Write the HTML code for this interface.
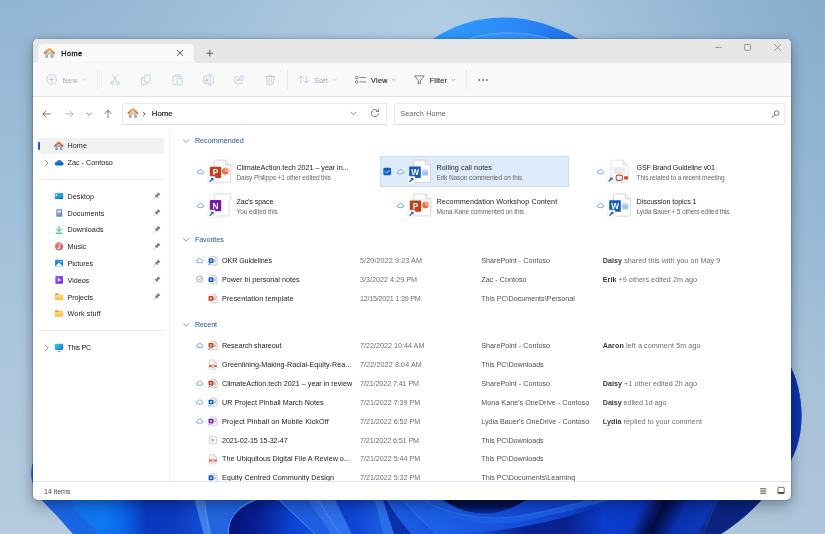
<!DOCTYPE html>
<html lang="en"><head><meta charset="utf-8"><title>Home - File Explorer</title>
<style>
html,body{margin:0;padding:0;}
body{width:825px;height:534px;overflow:hidden;position:relative;background:#a3bdd8;font-family:"Liberation Sans", sans-serif;}
.b{position:absolute;display:block;}
.t{position:absolute;white-space:nowrap;line-height:12px;font-size:7.2px;}
.t b{font-weight:700;color:#3a3a3a}
#win{position:absolute;left:33px;top:38.7px;width:758px;height:461.4px;border-radius:5px;background:#fff;overflow:hidden;}
#shadow{position:absolute;left:33px;top:38.7px;width:758px;height:461.4px;border-radius:5px;box-shadow:0 7px 15px rgba(0,0,20,.24),0 1px 8px rgba(0,0,20,.17),0 0 0 .6px rgba(40,55,80,.25);}
</style></head><body>
<svg class="b" style="left:0;top:0" width="825" height="534" viewBox="0 0 825 534">
<defs>
<linearGradient id="bg" x1="0" y1="0" x2="0" y2="1">
<stop offset="0" stop-color="#92b5d2"/><stop offset=".35" stop-color="#9fbfd9"/><stop offset=".65" stop-color="#acc6dc"/><stop offset="1" stop-color="#b5cadd"/>
</linearGradient>
<linearGradient id="bgr" x1="0" y1="0" x2="1" y2="0">
<stop offset="0" stop-color="#3a6fa8" stop-opacity="0"/><stop offset=".5" stop-color="#3a6fa8" stop-opacity=".02"/><stop offset="1" stop-color="#3a6fa8" stop-opacity=".06"/>
</linearGradient>
<radialGradient id="bgtr" gradientUnits="userSpaceOnUse" cx="840" cy="40" r="330">
<stop offset="0" stop-color="#3a6fa8" stop-opacity=".08"/><stop offset=".6" stop-color="#3a6fa8" stop-opacity=".05"/><stop offset="1" stop-color="#3a6fa8" stop-opacity="0"/>
</radialGradient>
<radialGradient id="bgl" gradientUnits="userSpaceOnUse" cx="438" cy="40" r="430">
<stop offset="0" stop-color="#dceefa" stop-opacity=".45"/><stop offset=".23" stop-color="#dceefa" stop-opacity=".34"/><stop offset=".47" stop-color="#dceefa" stop-opacity=".22"/><stop offset=".65" stop-color="#dceefa" stop-opacity=".11"/><stop offset=".78" stop-color="#dceefa" stop-opacity=".05"/><stop offset="1" stop-color="#dceefa" stop-opacity="0"/>
</radialGradient>
<linearGradient id="topb" x1="0" y1="0" x2="1" y2="0">
<stop offset="0" stop-color="#2f9dfc"/><stop offset=".55" stop-color="#2c8af7"/><stop offset="1" stop-color="#1f6ff0"/>
</linearGradient>
<clipPath id="bloom"><path d="M33 463 C30.5 469 30.5 478 33.5 486 C35.5 491 38.5 496 42 500.5 C47 506 52 511 57 516 L73 534 L721 534 C742 521 764 500 780 478 C795 458 801 440 801.5 418 C802 398 797 378 790 366 L700 300 L578 38.7 C552 24 527 17.5 503 17.5 C475 17.5 451 27 433 38.7 L100 300 Z"/></clipPath>
<linearGradient id="p2" gradientUnits="userSpaceOnUse" x1="60" y1="0" x2="200" y2="0">
<stop offset="0" stop-color="#1670ea"/><stop offset=".3" stop-color="#0e78f4"/><stop offset=".45" stop-color="#0b66ea"/><stop offset=".62" stop-color="#0a38c0"/><stop offset=".8" stop-color="#0b3abf"/><stop offset="1" stop-color="#154ad2"/>
</linearGradient>
<linearGradient id="p4" gradientUnits="userSpaceOnUse" x1="232" y1="0" x2="315" y2="0">
<stop offset="0" stop-color="#05157a"/><stop offset=".3" stop-color="#071f92"/><stop offset=".7" stop-color="#0c40d0"/><stop offset="1" stop-color="#1652de"/>
</linearGradient>
<linearGradient id="p6" gradientUnits="userSpaceOnUse" x1="335" y1="0" x2="378" y2="0">
<stop offset="0" stop-color="#0c3ecf"/><stop offset=".5" stop-color="#0f46d6"/><stop offset="1" stop-color="#1a58e0"/>
</linearGradient>
<linearGradient id="p8" gradientUnits="userSpaceOnUse" x1="386" y1="500" x2="470" y2="520">
<stop offset="0" stop-color="#0a38c0"/><stop offset=".35" stop-color="#1a5ae6"/><stop offset=".7" stop-color="#1450d8"/><stop offset="1" stop-color="#0a2ca8"/>
</linearGradient>
<linearGradient id="p9" gradientUnits="userSpaceOnUse" x1="455" y1="0" x2="640" y2="0">
<stop offset="0" stop-color="#1856de"/><stop offset=".15" stop-color="#1248cc"/><stop offset=".38" stop-color="#082090"/><stop offset=".6" stop-color="#08228e"/><stop offset=".8" stop-color="#0c3ccc"/><stop offset="1" stop-color="#0c3ccc" stop-opacity="0"/>
</linearGradient>
<linearGradient id="s1" gradientUnits="userSpaceOnUse" x1="399" y1="516" x2="439" y2="476">
<stop offset="0" stop-color="#1b5ce6"/><stop offset=".45" stop-color="#144ed8"/><stop offset="1" stop-color="#0f44d2"/>
</linearGradient>
<linearGradient id="s2" gradientUnits="userSpaceOnUse" x1="419" y1="516" x2="489" y2="446">
<stop offset="0" stop-color="#1e62ea"/><stop offset=".5" stop-color="#1652dc"/><stop offset="1" stop-color="#0f44d2"/>
</linearGradient>
<linearGradient id="lens" gradientUnits="userSpaceOnUse" x1="0" y1="498" x2="0" y2="514">
<stop offset="0" stop-color="#030a30"/><stop offset=".55" stop-color="#05165a"/><stop offset="1" stop-color="#0b2ea6"/>
</linearGradient>
<linearGradient id="p10" gradientUnits="userSpaceOnUse" x1="600" y1="517" x2="765" y2="604">
<stop offset="0" stop-color="#0c3ccc"/><stop offset=".17" stop-color="#0b38c4"/><stop offset=".235" stop-color="#061a6e"/><stop offset=".275" stop-color="#030d42"/><stop offset=".31" stop-color="#051660"/><stop offset=".38" stop-color="#0a30ac"/><stop offset=".5" stop-color="#0c38b8"/><stop offset=".53" stop-color="#0a2480"/><stop offset=".8" stop-color="#0a2684"/>
</linearGradient>
<linearGradient id="dk1" gradientUnits="userSpaceOnUse" x1="0" y1="498" x2="0" y2="520">
<stop offset="0" stop-color="#01051e"/><stop offset="1" stop-color="#03104e" stop-opacity="0"/>
</linearGradient>
<linearGradient id="rs" gradientUnits="userSpaceOnUse" x1="785" y1="0" x2="803" y2="0">
<stop offset="0" stop-color="#0a2a9a"/><stop offset="1" stop-color="#1038b4"/>
</linearGradient>
</defs>
<rect width="825" height="534" fill="url(#bg)"/>
<rect width="825" height="534" fill="url(#bgr)"/><rect width="825" height="534" fill="url(#bgtr)"/><rect width="825" height="534" fill="url(#bgl)"/>
<path d="M433 38.7 C451 27 475 17.5 503 17.5 C527 17.5 552 24 578 38.7 L578 60 L433 60 Z" fill="url(#topb)"/>
<path d="M470 38.7 C490 31.5 522 30.5 550 38.7 Z" fill="#46a4fc" opacity=".45"/><path d="M470 38.7 C490 31.5 522 30.5 550 38.7" fill="none" stroke="#6cbcff" stroke-width=".9" opacity=".8"/>
<g clip-path="url(#bloom)">
<rect x="0" y="300" width="825" height="234" fill="#1a66e2"/>
<path d="M30 464 L45 480 L65 500.5 L90 525 L99 534 L215 534 L205 480 Z" fill="url(#p2)"/>
<path d="M190 480 L194.5 500 L203.6 534 L212 534 L204 500 L200 480 Z" fill="#3f80e8"/>
<path d="M200 480 L204 500 L212 534 L232 534 L232 480 Z" fill="#2464e0"/>
<path d="M204.6 500 L209 534" stroke="#5a9af2" stroke-width=".8" fill="none"/>
<path d="M228 534 C228 520 232 508 257 500 L270 480 L330 480 L330 534 Z" fill="url(#p4)"/>
<path d="M228 534 C228 520 234 507 258 499" stroke="#4a9af5" stroke-width="1.3" fill="none"/>
<path d="M262 480 L279 500 L315 534 L345 534 L320 480 Z" fill="#1f5ee4"/>
<path d="M279 500 L315 534" stroke="#5a9ef5" stroke-width=".8" fill="none"/>
<path d="M290 480 L308 500 L331 534 L352 534 L335 500 L325 480 Z" fill="#2f70ec"/>
<path d="M300 480 L318 500 L340 534" stroke="#5a9ef5" stroke-width=".7" fill="none"/>
<path d="M325 480 L335 500 L352 534 L392 534 L380 480 Z" fill="url(#p6)"/>
<path d="M372 480 L375 500 L383 534 L394 534 L385 500 L382 480 Z" fill="#2a6eea"/>
<path d="M380 480 L383 500 L394 534 L660 534 L660 480 Z" fill="#0a30ac"/>
<path d="M376 480 L386 498 C394 512 403 524 412 534 L600 534 L600 480 Z" fill="url(#s1)"/>
<path d="M390 480 L401 498 C412 512 424 523 437 534 L600 534 L600 480 Z" fill="url(#s2)"/>
<path d="M386 498 C394 512 403 524 412 534" stroke="#3f80f0" stroke-width=".7" fill="none" opacity=".8"/>
<path d="M401 498 C412 512 424 523 437 534" stroke="#3f80f0" stroke-width=".7" fill="none" opacity=".8"/>
<path d="M575 480 L575 534 L825 534 L825 480 Z" fill="url(#p10)"/>
<path d="M440 498 C454 508 468 513.5 484 513.5 C502 513.5 516 507 529 498 Z" fill="url(#lens)"/>
<path d="M455 534 C505 531 550 524 600 506 L640 498 L640 534 Z" fill="url(#p9)"/>
<path d="M424 503 C452 519 488 524 520 518.5 C555 512 585 504 618 495" stroke="#1b5ee6" stroke-width="6" fill="none" stroke-linecap="round"/>
<path d="M424 501 C452 516 488 521 520 516 C555 510 585 502 618 493" stroke="#3a7cf0" stroke-width=".8" fill="none" opacity=".7"/>
<path d="M717 500 L703 534" stroke="#2a58c8" stroke-width=".6" fill="none" opacity=".7"/>
<rect x="785" y="300" width="40" height="200" fill="url(#rs)"/>
</g>
</svg>
<div id="shadow"></div>
<div id="win">
<div class="b" style="left:-33px;top:-38.7px;width:825px;height:534px;will-change:transform;">
<div class="b" style="left:33px;top:38.7px;width:758px;height:23.9px;background:#e7e7e7;"></div>
<svg class="b" style="left:0px;top:0px;" width="825" height="534" viewBox="0 0 825 534"><path d="M34.4 62.7 Q38.6 62.7 38.6 58.6 V48.4 Q38.6 44 43 44 H189.3 Q193.7 44 193.7 48.4 V58.6 Q193.7 62.7 197.9 62.7 Z" fill="#f9f9f9"/></svg>
<span class="t" id="t1" style="left:61.25px;top:47.80px;font-size:7.3px;color:#1b1b1b;letter-spacing:0.445px;-webkit-text-stroke:.32px #1b1b1b;">Home</span>
<div class="b" style="left:33px;top:62.5px;width:758px;height:33.5px;background:#f9f9f9;border-bottom:0.6px solid #e2e2e2;"></div>
<span class="t" id="t2" style="left:62.5px;top:74.50px;font-size:7.2px;color:#a5a5a5;letter-spacing:0.37px;">New</span>
<span class="t" id="t3" style="left:314.25px;top:74.50px;font-size:7.2px;color:#a5a5a5;letter-spacing:0.141px;">Sort</span>
<span class="t" id="t4" style="left:371px;top:74.50px;font-size:7.2px;color:#1b1b1b;letter-spacing:0.324px;-webkit-text-stroke:.12px #1b1b1b;">View</span>
<span class="t" id="t5" style="left:429.75px;top:74.50px;font-size:7.2px;color:#1b1b1b;letter-spacing:0.211px;-webkit-text-stroke:.12px #1b1b1b;">Filter</span>
<div class="b" style="left:97.2px;top:70px;width:0.6px;height:19px;background:#e6e6e6;"></div>
<div class="b" style="left:287.45px;top:70px;width:0.6px;height:19px;background:#e6e6e6;"></div>
<div class="b" style="left:465.95px;top:70px;width:0.6px;height:19px;background:#e6e6e6;"></div>
<div class="b" style="left:122px;top:103px;width:264.5px;height:21.5px;background:#fff;border:0.6px solid #eaeaea;border-bottom-color:#dcdcdc;border-radius:2px;box-sizing:border-box;"></div>
<div class="b" style="left:394.25px;top:103px;width:390.5px;height:21.5px;background:#fff;border:0.6px solid #eaeaea;border-bottom-color:#dcdcdc;border-radius:2px;box-sizing:border-box;"></div>
<span class="t" id="t6" style="left:151.75px;top:108.10px;font-size:7.8px;color:#1b1b1b;letter-spacing:0.047px;-webkit-text-stroke:.18px #1b1b1b;">Home</span>
<span class="t" id="t7" style="left:400.25px;top:108.25px;font-size:7.2px;color:#5f5f5f;letter-spacing:0.163px;">Search Home</span>
<div class="b" style="left:38px;top:137.5px;width:126.2px;height:16.2px;background:#f1f1f1;border-radius:2.5px;"></div>
<div class="b" style="left:37.9px;top:141.9px;width:1.8px;height:7.8px;background:#0f5fc0;border-radius:1px;"></div>
<div class="b" style="left:169px;top:130px;width:0.6px;height:351px;background:#eeeeee;"></div>
<div class="b" style="left:38px;top:178.6px;width:126px;height:0.6px;background:#ececec;"></div>
<div class="b" style="left:38px;top:330.4px;width:126px;height:0.6px;background:#ececec;"></div>
<span class="t" id="t8" style="left:67.5px;top:140.25px;font-size:7.2px;color:#1b1b1b;letter-spacing:0.078px;">Home</span>
<span class="t" id="t9" style="left:67.5px;top:157.25px;font-size:7.2px;color:#1b1b1b;letter-spacing:0.012px;">Zac - Contoso</span>
<span class="t" id="t10" style="left:67.5px;top:190.75px;font-size:7.2px;color:#1b1b1b;letter-spacing:0.032px;">Desktop</span>
<span class="t" id="t11" style="left:67.5px;top:207.50px;font-size:7.2px;color:#1b1b1b;letter-spacing:0.06px;">Documents</span>
<span class="t" id="t12" style="left:67.5px;top:224.30px;font-size:7.2px;color:#1b1b1b;letter-spacing:0.06px;">Downloads</span>
<span class="t" id="t13" style="left:67.5px;top:241.10px;font-size:7.2px;color:#1b1b1b;letter-spacing:-0.016px;">Music</span>
<span class="t" id="t14" style="left:67.5px;top:257.90px;font-size:7.2px;color:#1b1b1b;letter-spacing:-0.059px;">Pictures</span>
<span class="t" id="t15" style="left:67.5px;top:274.70px;font-size:7.2px;color:#1b1b1b;letter-spacing:-0.027px;">Videos</span>
<span class="t" id="t16" style="left:67.5px;top:291.50px;font-size:7.2px;color:#1b1b1b;letter-spacing:-0.059px;">Projects</span>
<span class="t" id="t17" style="left:67.5px;top:308.30px;font-size:7.2px;color:#1b1b1b;letter-spacing:0.121px;">Work stuff</span>
<span class="t" id="t18" style="left:67.5px;top:341.80px;font-size:7.2px;color:#1b1b1b;letter-spacing:-0.309px;">This PC</span>
<span class="t" id="t19" style="left:194.9px;top:135.30px;font-size:7.2px;color:#24559f;">Recommended</span>
<span class="t" id="t20" style="left:194.9px;top:234.20px;font-size:7.2px;color:#24559f;letter-spacing:-0.09px;">Favorites</span>
<span class="t" id="t21" style="left:194.9px;top:319.20px;font-size:7.2px;color:#24559f;letter-spacing:-0.13px;">Recent</span>
<div class="b" style="left:380.2px;top:155.8px;width:188.8px;height:31px;background:#ddebfa;border:0.6px solid #c6ddf6;box-sizing:border-box;border-radius:.6px;"></div>
<span class="t" id="t22" style="left:236.5px;top:162.00px;font-size:7.2px;color:#1b1b1b;letter-spacing:-0.041px;">ClimateAction.tech 2021 – year in...</span>
<span class="t" id="t23" style="left:236.5px;top:171.90px;font-size:6.6px;color:#6a6a6a;letter-spacing:-0.15px;">Daisy Philipps +1 other edited this</span>
<span class="t" id="t24" style="left:236.5px;top:195.75px;font-size:7.2px;color:#1b1b1b;letter-spacing:-0.125px;">Zac's space</span>
<span class="t" id="t25" style="left:236.5px;top:205.65px;font-size:6.6px;color:#6a6a6a;letter-spacing:-0.119px;">You edited this</span>
<span class="t" id="t26" style="left:436.5px;top:162.00px;font-size:7.2px;color:#1b1b1b;letter-spacing:0.064px;">Rolling call notes</span>
<span class="t" id="t27" style="left:436.5px;top:171.90px;font-size:6.6px;color:#6a6a6a;letter-spacing:-0.145px;">Erik Nason commented on this</span>
<span class="t" id="t28" style="left:436.5px;top:195.75px;font-size:7.2px;color:#1b1b1b;letter-spacing:0.097px;">Recommendation Workshop Content</span>
<span class="t" id="t29" style="left:436.5px;top:205.65px;font-size:6.6px;color:#6a6a6a;letter-spacing:-0.14px;">Mona Kane commented on this</span>
<span class="t" id="t30" style="left:636.5px;top:162.00px;font-size:7.2px;color:#1b1b1b;letter-spacing:-0.159px;">GSF Brand Guideline v01</span>
<span class="t" id="t31" style="left:636.5px;top:171.90px;font-size:6.6px;color:#6a6a6a;letter-spacing:-0.148px;">This related to a recent meeting</span>
<span class="t" id="t32" style="left:636.5px;top:195.75px;font-size:7.2px;color:#1b1b1b;letter-spacing:-0.081px;">Discussion topics 1</span>
<span class="t" id="t33" style="left:636.5px;top:205.65px;font-size:6.6px;color:#6a6a6a;letter-spacing:-0.153px;">Lydia Bauer + 5 others edited this</span>
<div class="b" style="left:170px;top:130px;width:621px;height:351.2px;overflow:hidden;"><div class="b" style="left:-170px;top:-130px;">
<span class="t" id="t34" style="left:222px;top:255.25px;font-size:7.2px;color:#1b1b1b;letter-spacing:-0.11px;">OKR Guidelines</span>
<span class="t" id="t35" style="left:360px;top:255.25px;font-size:7.2px;color:#6e6e6e;letter-spacing:0.097px;">5/20/2022 9:23 AM</span>
<span class="t" id="t36" style="left:481.25px;top:255.25px;font-size:7.2px;color:#505050;letter-spacing:0.003px;">SharePoint - Contoso</span>
<span class="t" id="t37" style="left:602.75px;top:255.25px;font-size:7.2px;color:#6e6e6e;letter-spacing:0.035px;"><b>Daisy</b> shared this with you on May 9</span>
<span class="t" id="t38" style="left:222px;top:274.10px;font-size:7.2px;color:#1b1b1b;letter-spacing:0.025px;">Power bi personal notes</span>
<span class="t" id="t39" style="left:360px;top:274.10px;font-size:7.2px;color:#6e6e6e;letter-spacing:0.016px;">3/3/2022 4:29 PM</span>
<span class="t" id="t40" style="left:481.25px;top:274.10px;font-size:7.2px;color:#505050;letter-spacing:0.012px;">Zac - Contoso</span>
<span class="t" id="t41" style="left:602.75px;top:274.10px;font-size:7.2px;color:#6e6e6e;letter-spacing:0.039px;"><b>Erik</b> +9 others edited 2m ago</span>
<span class="t" id="t42" style="left:222px;top:293.00px;font-size:7.2px;color:#1b1b1b;letter-spacing:0.075px;">Presentation template</span>
<span class="t" id="t43" style="left:360px;top:293.00px;font-size:7.2px;color:#6e6e6e;letter-spacing:-0.236px;">12/15/2021 1:39 PM</span>
<span class="t" id="t44" style="left:481.25px;top:293.00px;font-size:7.2px;color:#505050;letter-spacing:-0.03px;">This PC\Documents\Personal</span>
<span class="t" id="t45" style="left:222px;top:340.00px;font-size:7.2px;color:#1b1b1b;letter-spacing:-0.078px;">Research shareout</span>
<span class="t" id="t46" style="left:360px;top:340.00px;font-size:7.2px;color:#6e6e6e;letter-spacing:0.003px;">7/22/2022 10:44 AM</span>
<span class="t" id="t47" style="left:481.25px;top:340.00px;font-size:7.2px;color:#505050;letter-spacing:0.003px;">SharePoint - Contoso</span>
<span class="t" id="t48" style="left:602.75px;top:340.00px;font-size:7.2px;color:#6e6e6e;letter-spacing:0.071px;"><b>Aaron</b> left a comment 5m ago</span>
<span class="t" id="t49" style="left:222px;top:358.90px;font-size:7.2px;color:#1b1b1b;letter-spacing:0.017px;">Greenlining-Making-Racial-Equity-Rea...</span>
<span class="t" id="t50" style="left:360px;top:358.90px;font-size:7.2px;color:#6e6e6e;letter-spacing:0.092px;">7/22/2022 8:04 AM</span>
<span class="t" id="t51" style="left:481.25px;top:358.90px;font-size:7.2px;color:#505050;letter-spacing:-0.043px;">This PC\Downloads</span>
<span class="t" id="t52" style="left:222px;top:377.80px;font-size:7.2px;color:#1b1b1b;letter-spacing:-0.004px;">ClimateAction.tech 2021 – year in review</span>
<span class="t" id="t53" style="left:360px;top:377.80px;font-size:7.2px;color:#6e6e6e;letter-spacing:-0.103px;">7/21/2022 7:41 PM</span>
<span class="t" id="t54" style="left:481.25px;top:377.80px;font-size:7.2px;color:#505050;letter-spacing:0.003px;">SharePoint - Contoso</span>
<span class="t" id="t55" style="left:602.75px;top:377.80px;font-size:7.2px;color:#6e6e6e;letter-spacing:0.031px;"><b>Daisy</b> +1 other edited 2h ago</span>
<span class="t" id="t56" style="left:222px;top:396.70px;font-size:7.2px;color:#1b1b1b;letter-spacing:0.018px;">UR Project Pinball March Notes</span>
<span class="t" id="t57" style="left:360px;top:396.70px;font-size:7.2px;color:#6e6e6e;letter-spacing:-0.032px;">7/21/2022 7:39 PM</span>
<span class="t" id="t58" style="left:481.25px;top:396.70px;font-size:7.2px;color:#505050;letter-spacing:0.022px;">Mona Kane's OneDrive - Contoso</span>
<span class="t" id="t59" style="left:602.75px;top:396.70px;font-size:7.2px;color:#6e6e6e;letter-spacing:-0.055px;"><b>Daisy</b> edited 1d ago</span>
<span class="t" id="t60" style="left:222px;top:415.60px;font-size:7.2px;color:#1b1b1b;letter-spacing:0.078px;">Project Pinball on Mobile KickOff</span>
<span class="t" id="t61" style="left:360px;top:415.60px;font-size:7.2px;color:#6e6e6e;letter-spacing:-0.032px;">7/21/2022 6:52 PM</span>
<span class="t" id="t62" style="left:481.25px;top:415.60px;font-size:7.2px;color:#505050;letter-spacing:-0.021px;">Lydia Bauer's OneDrive - Contoso</span>
<span class="t" id="t63" style="left:602.75px;top:415.60px;font-size:7.2px;color:#6e6e6e;letter-spacing:0.058px;"><b>Lydia</b> replied to your comment</span>
<span class="t" id="t64" style="left:222px;top:434.50px;font-size:7.2px;color:#1b1b1b;letter-spacing:-0.102px;">2021-02-15 15-32-47</span>
<span class="t" id="t65" style="left:360px;top:434.50px;font-size:7.2px;color:#6e6e6e;letter-spacing:-0.103px;">7/21/2022 6:51 PM</span>
<span class="t" id="t66" style="left:481.25px;top:434.50px;font-size:7.2px;color:#505050;letter-spacing:-0.043px;">This PC\Downloads</span>
<span class="t" id="t67" style="left:222px;top:453.40px;font-size:7.2px;color:#1b1b1b;letter-spacing:0.011px;">The Ubiquitous Digital File A Review o...</span>
<span class="t" id="t68" style="left:360px;top:453.40px;font-size:7.2px;color:#6e6e6e;letter-spacing:-0.032px;">7/21/2022 5:44 PM</span>
<span class="t" id="t69" style="left:481.25px;top:453.40px;font-size:7.2px;color:#505050;letter-spacing:-0.043px;">This PC\Downloads</span>
<span class="t" id="t70" style="left:222px;top:472.30px;font-size:7.2px;color:#1b1b1b;letter-spacing:0.059px;">Equity Centred Community Design</span>
<span class="t" id="t71" style="left:360px;top:472.30px;font-size:7.2px;color:#6e6e6e;letter-spacing:-0.032px;">7/21/2022 5:32 PM</span>
<span class="t" id="t72" style="left:481.25px;top:472.30px;font-size:7.2px;color:#505050;letter-spacing:0.004px;">This PC\Documents\Learning</span>
</div></div>
<div class="b" style="left:33px;top:481px;width:758px;height:0.6px;background:#dfe5f0;"></div>
<span class="t" id="t73" style="left:44px;top:485.50px;font-size:7.2px;color:#4a4a4a;letter-spacing:-0.084px;">14 items</span>
<svg class="b" style="left:0px;top:0px;" width="825" height="534" viewBox="0 0 825 534"><defs>
<linearGradient id="ho" x1="0" y1="0" x2="0" y2="1"><stop offset="0" stop-color="#f7a42c"/><stop offset="1" stop-color="#dc5f12"/></linearGradient>
<linearGradient id="ho2" x1="0" y1="0" x2="0" y2="1"><stop offset="0" stop-color="#ee6a2e"/><stop offset="1" stop-color="#d24a1a"/></linearGradient>
<linearGradient id="hg2" x1="0" y1="0" x2="0" y2="1"><stop offset="0" stop-color="#c3cfdd"/><stop offset="1" stop-color="#7f93ae"/></linearGradient>
<linearGradient id="hg" x1="0" y1="0" x2="0" y2="1"><stop offset="0" stop-color="#ececec"/><stop offset="1" stop-color="#9c9c9c"/></linearGradient>
<linearGradient id="od" x1="0" y1="0" x2="1" y2="1"><stop offset="0" stop-color="#1a8de8"/><stop offset="1" stop-color="#0b55b5"/></linearGradient>
<linearGradient id="dk" x1="0" y1="0" x2="1" y2="1"><stop offset="0" stop-color="#40c8f2"/><stop offset="1" stop-color="#1276c9"/></linearGradient>
<linearGradient id="dc" x1="0" y1="0" x2="1" y2="1"><stop offset="0" stop-color="#9db7d8"/><stop offset="1" stop-color="#5f7fb2"/></linearGradient>
<linearGradient id="mu" x1="0" y1="0" x2="1" y2="1"><stop offset="0" stop-color="#f58a3a"/><stop offset="1" stop-color="#c05aa6"/></linearGradient>
<linearGradient id="pc" x1="0" y1="0" x2="0" y2="1"><stop offset="0" stop-color="#2a9cf0"/><stop offset="1" stop-color="#0c62cc"/></linearGradient>
<linearGradient id="vd" x1="0" y1="0" x2="1" y2="1"><stop offset="0" stop-color="#a45cf5"/><stop offset="1" stop-color="#7326dc"/></linearGradient>
<linearGradient id="fd" x1="0" y1="0" x2="0" y2="1"><stop offset="0" stop-color="#ffe07a"/><stop offset="1" stop-color="#f6bd44"/></linearGradient>
</defs><circle cx="51.6" cy="79.4" r="4.85" fill="none" stroke="#b9b9b9" stroke-width=".65"/><path d="M49.2 79.4 H54 M51.6 77 V81.8" stroke="#8ec0f2" stroke-width=".7" stroke-linecap="round"/><path d="M82.9 78.9 L84.5 80.5 L86.1 78.9" fill="none" stroke="#b5b5b5" stroke-width="0.55" stroke-linecap="round" stroke-linejoin="round"/><path d="M112.3 74.9 L117.3 82.4 M117.7 74.9 L112.7 82.4" stroke="#b9b9b9" stroke-width=".65" stroke-linecap="round"/><circle cx="112.3" cy="83.2" r="1.55" fill="none" stroke="#8ec0f2" stroke-width=".65"/><circle cx="117.7" cy="83.2" r="1.55" fill="none" stroke="#8ec0f2" stroke-width=".65"/><path d="M143.6 77.6 H142.9 Q141.4 77.6 141.4 79.1 V83.2 Q141.4 84.7 142.9 84.7 H145.8 Q147.3 84.7 147.3 83.2 V82.9" fill="none" stroke="#b9b9b9" stroke-width=".65"/><rect x="144.3" y="75" width="5.9" height="7.4" rx="1.4" fill="none" stroke="#8ec0f2" stroke-width=".65"/><path d="M176.5 84.9 H174.3 Q172.9 84.9 172.9 83.5 V77.2 Q172.9 75.8 174.3 75.8 H175 M180 75.8 H180.6 Q182 75.8 182 77.2 V77.6" fill="none" stroke="#b9b9b9" stroke-width=".65"/><rect x="175" y="74.7" width="5" height="2" rx=".9" fill="none" stroke="#b9b9b9" stroke-width=".65"/><rect x="177" y="78.2" width="5.2" height="6.8" rx="1.2" fill="none" stroke="#8ec0f2" stroke-width=".65"/><path d="M208.6 76.2 H205.2 Q203.7 76.2 203.7 77.7 V81.9 Q203.7 83.4 205.2 83.4 H208.6 M211.4 76.2 H212 Q213.5 76.2 213.5 77.7 V81.9 Q213.5 83.4 212 83.4 H211.4" fill="none" stroke="#b9b9b9" stroke-width=".65"/><path d="M210 74.5 V85 M208.9 74.5 H211.1 M208.9 85 H211.1" stroke="#8ec0f2" stroke-width=".65" stroke-linecap="round"/><text x="205.1" y="81.7" font-family="Liberation Sans, sans-serif" font-size="4.6" fill="#8ec0f2" font-weight="700">A</text><path d="M238.4 76.6 H236.4 Q235 76.6 235 78 V82.3 Q235 83.7 236.4 83.7 H240.9 Q242.3 83.7 242.3 82.3 V81.9" fill="none" stroke="#b9b9b9" stroke-width=".65"/><path d="M241.2 75.6 L244.3 78.3 L241.2 81 V79.5 Q238.6 79.4 237.4 81.2 Q237.6 77.6 241.2 77.2 Z" fill="none" stroke="#8ec0f2" stroke-width=".65" stroke-linejoin="round"/><path d="M265.6 76.5 H275 M268.4 76.3 Q268.4 74.9 270.3 74.9 Q272.2 74.9 272.2 76.3 M266.6 76.6 L267.4 83.3 Q267.5 84.4 268.6 84.4 H272 Q273.1 84.4 273.2 83.3 L274 76.6 M269.3 78.6 V82.2 M271.3 78.6 V82.2" fill="none" stroke="#b9b9b9" stroke-width=".65" stroke-linecap="round"/><path d="M300.9 83.2 V76.2 M298.6 78.4 L300.9 76.1 L303.2 78.4" fill="none" stroke="#b9b9b9" stroke-width=".65" stroke-linecap="round" stroke-linejoin="round"/><path d="M306.2 75.9 V82.9 M303.9 80.7 L306.2 83 L308.5 80.7" fill="none" stroke="#8ec0f2" stroke-width=".65" stroke-linecap="round" stroke-linejoin="round"/><path d="M333.0 79.0 L334.6 80.6 L336.20000000000005 79.0" fill="none" stroke="#b5b5b5" stroke-width="0.55" stroke-linecap="round" stroke-linejoin="round"/><circle cx="356.7" cy="77.6" r="1.35" fill="none" stroke="#3c3c3c" stroke-width=".6"/><circle cx="356.7" cy="81.9" r="1.35" fill="none" stroke="#3c3c3c" stroke-width=".6"/><path d="M360 77.6 H365.7 M360 81.9 H365.7" stroke="#3c3c3c" stroke-width=".65" stroke-linecap="round"/><path d="M392.0 79.0 L393.6 80.6 L395.20000000000005 79.0" fill="none" stroke="#7a7a7a" stroke-width="0.55" stroke-linecap="round" stroke-linejoin="round"/><path d="M414.6 75.9 H424.2 L420.5 80.6 V83.2 L418.3 84.1 V80.6 Z" fill="none" stroke="#3c3c3c" stroke-width=".65" stroke-linejoin="round"/><path d="M451.79999999999995 79.0 L453.4 80.6 L455.0 79.0" fill="none" stroke="#7a7a7a" stroke-width="0.55" stroke-linecap="round" stroke-linejoin="round"/><circle cx="479.2" cy="80" r=".8" fill="#222"/><circle cx="483" cy="80" r=".8" fill="#222"/><circle cx="486.8" cy="80" r=".8" fill="#222"/><path d="M177.3 50.3 L182.8 55.5 M182.8 50.3 L177.3 55.5" stroke="#383838" stroke-width=".85" stroke-linecap="round"/><path d="M206.8 53.2 H212.8 M209.8 50.2 V56.2" stroke="#383838" stroke-width=".8" stroke-linecap="round"/><path d="M715.3 47.4 H721.8" stroke="#6f6f6f" stroke-width=".65"/><rect x="744.5" y="44.5" width="6.1" height="5.9" rx="1.1" fill="none" stroke="#6f6f6f" stroke-width=".65"/><path d="M774.4 44.4 L780.9 50.6 M780.9 44.4 L774.4 50.6" stroke="#6f6f6f" stroke-width=".65" stroke-linecap="round"/><path d="M50.4 113.9 H43 M46.1 110.8 L42.9 113.9 L46.1 117" fill="none" stroke="#4c4c4c" stroke-width=".75" stroke-linecap="round" stroke-linejoin="round"/><path d="M65.6 113.9 H73 M69.9 110.8 L73.1 113.9 L69.9 117" fill="none" stroke="#929292" stroke-width=".65" stroke-linecap="round" stroke-linejoin="round"/><path d="M87.0 112.94999999999999 L89.3 115.25 L91.6 112.94999999999999" fill="none" stroke="#4c4c4c" stroke-width="0.65" stroke-linecap="round" stroke-linejoin="round"/><path d="M108 117.6 V110.3 M104.8 113.5 L108 110.2 L111.2 113.5" fill="none" stroke="#4c4c4c" stroke-width=".75" stroke-linecap="round" stroke-linejoin="round"/><g transform="translate(127.6 108.15) scale(0.6625)"><path d="M2.1 7 L8 2 L13.9 7 V14.4 H9.8 V9.6 H6.2 V14.4 H2.1 Z" fill="url(#hg)"/><path d="M0.9 7.6 L8 1.1 L15.1 7.6" fill="none" stroke="url(#ho)" stroke-width="2.3" stroke-linecap="round" stroke-linejoin="round"/></g><path d="M143.4 112.2 L145.20000000000002 114.0 L143.4 115.8" fill="none" stroke="#333" stroke-width="0.85" stroke-linecap="round" stroke-linejoin="round"/><path d="M351.1 112.3 L353.5 114.7 L355.9 112.3" fill="none" stroke="#4c4c4c" stroke-width="0.65" stroke-linecap="round" stroke-linejoin="round"/><path d="M378.1 111.4 A3.6 3.6 0 1 0 378.5 113.6" fill="none" stroke="#4c4c4c" stroke-width=".7" stroke-linecap="round"/><path d="M376.2 111.4 H378.6 V109" fill="none" stroke="#4c4c4c" stroke-width=".7" stroke-linecap="round" stroke-linejoin="round"/><circle cx="776.6" cy="113.1" r="2.35" fill="none" stroke="#4f4f4f" stroke-width=".75"/><path d="M774.9 114.8 L771.8 117.6" stroke="#4f4f4f" stroke-width=".85" stroke-linecap="round"/><g transform="translate(43.9 48.0) scale(0.68125)"><path d="M2.1 7 L8 2 L13.9 7 V14.4 H9.8 V9.6 H6.2 V14.4 H2.1 Z" fill="url(#hg)"/><path d="M0.9 7.6 L8 1.1 L15.1 7.6" fill="none" stroke="url(#ho)" stroke-width="2.3" stroke-linecap="round" stroke-linejoin="round"/></g><path d="M760.2 488.6 H766.2 M760.2 490.2 H766.2 M760.2 491.8 H766.2 M760.2 493.4 H766.2" stroke="#555" stroke-width=".8"/><rect x="778" y="487.3" width="6.2" height="6.2" rx=".8" fill="none" stroke="#4a4a4a" stroke-width=".8"/><rect x="778" y="492" width="6.2" height="1.6" fill="#4a4a4a"/><g transform="translate(54.2 141.6) scale(0.575)"><path d="M2.1 7 L8 2 L13.9 7 V14.4 H9.8 V9.6 H6.2 V14.4 H2.1 Z" fill="url(#hg2)"/><path d="M0.9 7.6 L8 1.1 L15.1 7.6" fill="none" stroke="url(#ho2)" stroke-width="2.7" stroke-linecap="round" stroke-linejoin="round"/></g><path d="M45.2 160.2 L48.0 163.0 L45.2 165.8" fill="none" stroke="#686868" stroke-width="0.75" stroke-linecap="round" stroke-linejoin="round"/><path d="M45.300000000000004 345.09999999999997 L48.1 347.9 L45.300000000000004 350.7" fill="none" stroke="#686868" stroke-width="0.75" stroke-linecap="round" stroke-linejoin="round"/><g transform="translate(54.6 159.5) scale(0.64)"><path d="M3.4 9.4 C1.5 9.4 0.3 8.1 0.3 6.6 C0.3 5.1 1.5 4 3 4 C3.6 2 5.3 0.6 7.4 0.6 C9.5 0.6 11.1 2 11.5 3.9 C13 4.1 14 5.3 14 6.7 C14 8.2 12.9 9.4 11.3 9.4 Z" fill="url(#od)"/></g><rect x="54.9" y="193.1" width="8.3" height="6" rx=".7" fill="url(#dk)"/><rect x="54.9" y="198" width="8.3" height="1.1" fill="#0f6fbf" fill-opacity=".55"/><rect x="56" y="194.4" width=".9" height="1.6" fill="#e9fbff"/><rect x="56.1" y="209.1" width="6.1" height="7.7" rx=".7" fill="url(#dc)"/><rect x="57.6" y="210.5" width="3.2" height="2.6" fill="#c9d8ee"/><rect x="59.4" y="210.9" width="1" height="1" fill="#fff"/><path d="M59 226.2 V231.2 M56.5 228.9 L59 231.4 L61.5 228.9" fill="none" stroke="#1fb58f" stroke-width="1" stroke-linecap="round" stroke-linejoin="round"/><path d="M56.1 233.2 H61.9" stroke="#16a37f" stroke-width="1" stroke-linecap="round"/><circle cx="59.05" cy="246.4" r="4.15" fill="url(#mu)"/><path d="M59.6 248.2 V243.9 L61 244.5" fill="none" stroke="#fff" stroke-width=".7" stroke-linecap="round"/><circle cx="58.7" cy="248.2" r="1" fill="#fff"/><rect x="55.1" y="259.8" width="7.9" height="6.8" rx=".9" fill="url(#pc)"/><path d="M55.1 266.6 L59.05 262.6 L63 266.6 Z" fill="#fff"/><circle cx="60.9" cy="261.7" r=".7" fill="#e9f4ff"/><rect x="55.3" y="276.1" width="7.6" height="7.6" rx=".9" fill="url(#vd)"/><path d="M57.9 278.1 L61 279.9 L57.9 281.7 Z" fill="#fff"/><path d="M56.1 277 H56.9 M56.1 282.8 H56.9 M61.3 277 H62.1 M61.3 282.8 H62.1" stroke="#5c1fc4" stroke-width=".7"/><path d="M54.8 294.3 Q54.8 293.2 55.9 293.2 H58 L59.2 294.4 H62.2 Q63.2 294.4 63.2 295.4 V296.2 H54.8 Z" fill="#e9a93a"/><rect x="54.8" y="295.09999999999997" width="8.4" height="4.9" rx=".8" fill="url(#fd)"/><path d="M54.8 311.1 Q54.8 310.0 55.9 310.0 H58 L59.2 311.2 H62.2 Q63.2 311.2 63.2 312.2 V313.0 H54.8 Z" fill="#e9a93a"/><rect x="54.8" y="311.9" width="8.4" height="4.9" rx=".8" fill="url(#fd)"/><rect x="54.8" y="343.7" width="8.4" height="6.2" rx=".8" fill="url(#dk)"/><path d="M57.4 351.6 H60.6 M59 350 V351.5" stroke="#7f9bb5" stroke-width=".7"/><g transform="translate(156.8 195.89999999999998) scale(0.92)"><path d="M1.9 -3.5 L3.6 -1.8 C3.9 -1.5 3.8 -1.1 3.4 -0.9 L1.6 -0.1 L0.9 1.7 C0.7 2.1 0.3 2.2 0 1.9 L-1.9 0 C-2.2 -0.3 -2.1 -0.7 -1.7 -0.9 L0.1 -1.6 L0.9 -3.4 C1.1 -3.8 1.6 -3.8 1.9 -3.5 Z" fill="#7d7d7d"/><path d="M-1 1 L-3.3 3.3" stroke="#8a8a8a" stroke-width=".55" stroke-linecap="round"/></g><g transform="translate(156.8 212.7) scale(0.92)"><path d="M1.9 -3.5 L3.6 -1.8 C3.9 -1.5 3.8 -1.1 3.4 -0.9 L1.6 -0.1 L0.9 1.7 C0.7 2.1 0.3 2.2 0 1.9 L-1.9 0 C-2.2 -0.3 -2.1 -0.7 -1.7 -0.9 L0.1 -1.6 L0.9 -3.4 C1.1 -3.8 1.6 -3.8 1.9 -3.5 Z" fill="#7d7d7d"/><path d="M-1 1 L-3.3 3.3" stroke="#8a8a8a" stroke-width=".55" stroke-linecap="round"/></g><g transform="translate(156.8 229.5) scale(0.92)"><path d="M1.9 -3.5 L3.6 -1.8 C3.9 -1.5 3.8 -1.1 3.4 -0.9 L1.6 -0.1 L0.9 1.7 C0.7 2.1 0.3 2.2 0 1.9 L-1.9 0 C-2.2 -0.3 -2.1 -0.7 -1.7 -0.9 L0.1 -1.6 L0.9 -3.4 C1.1 -3.8 1.6 -3.8 1.9 -3.5 Z" fill="#7d7d7d"/><path d="M-1 1 L-3.3 3.3" stroke="#8a8a8a" stroke-width=".55" stroke-linecap="round"/></g><g transform="translate(156.8 246.29999999999998) scale(0.92)"><path d="M1.9 -3.5 L3.6 -1.8 C3.9 -1.5 3.8 -1.1 3.4 -0.9 L1.6 -0.1 L0.9 1.7 C0.7 2.1 0.3 2.2 0 1.9 L-1.9 0 C-2.2 -0.3 -2.1 -0.7 -1.7 -0.9 L0.1 -1.6 L0.9 -3.4 C1.1 -3.8 1.6 -3.8 1.9 -3.5 Z" fill="#7d7d7d"/><path d="M-1 1 L-3.3 3.3" stroke="#8a8a8a" stroke-width=".55" stroke-linecap="round"/></g><g transform="translate(156.8 263.09999999999997) scale(0.92)"><path d="M1.9 -3.5 L3.6 -1.8 C3.9 -1.5 3.8 -1.1 3.4 -0.9 L1.6 -0.1 L0.9 1.7 C0.7 2.1 0.3 2.2 0 1.9 L-1.9 0 C-2.2 -0.3 -2.1 -0.7 -1.7 -0.9 L0.1 -1.6 L0.9 -3.4 C1.1 -3.8 1.6 -3.8 1.9 -3.5 Z" fill="#7d7d7d"/><path d="M-1 1 L-3.3 3.3" stroke="#8a8a8a" stroke-width=".55" stroke-linecap="round"/></g><g transform="translate(156.8 279.9) scale(0.92)"><path d="M1.9 -3.5 L3.6 -1.8 C3.9 -1.5 3.8 -1.1 3.4 -0.9 L1.6 -0.1 L0.9 1.7 C0.7 2.1 0.3 2.2 0 1.9 L-1.9 0 C-2.2 -0.3 -2.1 -0.7 -1.7 -0.9 L0.1 -1.6 L0.9 -3.4 C1.1 -3.8 1.6 -3.8 1.9 -3.5 Z" fill="#7d7d7d"/><path d="M-1 1 L-3.3 3.3" stroke="#8a8a8a" stroke-width=".55" stroke-linecap="round"/></g><g transform="translate(156.8 296.7) scale(0.92)"><path d="M1.9 -3.5 L3.6 -1.8 C3.9 -1.5 3.8 -1.1 3.4 -0.9 L1.6 -0.1 L0.9 1.7 C0.7 2.1 0.3 2.2 0 1.9 L-1.9 0 C-2.2 -0.3 -2.1 -0.7 -1.7 -0.9 L0.1 -1.6 L0.9 -3.4 C1.1 -3.8 1.6 -3.8 1.9 -3.5 Z" fill="#7d7d7d"/><path d="M-1 1 L-3.3 3.3" stroke="#8a8a8a" stroke-width=".55" stroke-linecap="round"/></g><path d="M183.4 139.75 L186.1 142.45 L188.79999999999998 139.75" fill="none" stroke="#6a6a6a" stroke-width="0.7" stroke-linecap="round" stroke-linejoin="round"/><path d="M183.4 238.45000000000002 L186.1 241.15 L188.79999999999998 238.45000000000002" fill="none" stroke="#6a6a6a" stroke-width="0.7" stroke-linecap="round" stroke-linejoin="round"/><path d="M183.4 323.54999999999995 L186.1 326.25 L188.79999999999998 323.54999999999995" fill="none" stroke="#6a6a6a" stroke-width="0.7" stroke-linecap="round" stroke-linejoin="round"/></svg>
<div class="b" style="left:170px;top:130px;width:621px;height:351.2px;overflow:hidden;"><svg class="b" style="left:-170px;top:-130px;" width="825" height="534" viewBox="0 0 825 534"><path d="M215.0 160.15 H225.7 L230.7 165.15 V181.15 Q230.7 182.15 229.7 182.15 H215.0 Q214.0 182.15 214.0 181.15 V161.15 Q214.0 160.15 215.0 160.15 Z" fill="#fff" stroke="#bcbcbc" stroke-width=".6"/><path d="M225.7 160.15 V164.35 Q225.7 165.15 226.5 165.15 H230.7" fill="#f1f1f1" stroke="#bcbcbc" stroke-width=".6"/><circle cx="225.4" cy="171.35" r="3.3" fill="#ed6c47"/><path d="M225.4 171.35 V167.35 A4 4 0 0 1 229.4 171.35 Z" fill="#ff8f6b" stroke="#fff" stroke-width=".5"/><rect x="209.8" y="166.75" width="11.4" height="11.2" rx=".7" fill="#c43e1c"/><text x="215.6" y="175.35" font-family="Liberation Sans, sans-serif" font-weight="700" font-size="8.4" fill="#fff" text-anchor="middle">P</text><g transform="translate(207.6 176.25) scale(0.76)"><rect x="0" y="0" width="10" height="10" rx="1.2" fill="#fff" stroke="#d9d9d9" stroke-width=".5"/><path d="M2.6 7.6 L6.4 3.8" stroke="#1b5fc2" stroke-width="1.7" stroke-linecap="butt" fill="none"/><path d="M3.6 2.4 H7.7 V6.5 Z" fill="#1b5fc2"/></g><path d="M215.3 194.0 H229.70000000000002 Q230.70000000000002 194.0 230.70000000000002 195.0 V199.0 Q230.70000000000002 200.0 229.9 200.0 Q229.10000000000002 200.0 229.10000000000002 201.0 V215.0 Q229.10000000000002 216.0 228.10000000000002 216.0 H215.3 Q214.3 216.0 214.3 215.0 V195.0 Q214.3 194.0 215.3 194.0 Z" fill="#fff" stroke="#c6c6c6" stroke-width=".6"/><rect x="209.8" y="200.1" width="11.4" height="11.2" rx=".7" fill="#7719aa"/><text x="215.5" y="208.7" font-family="Liberation Sans, sans-serif" font-weight="700" font-size="8.4" fill="#fff" text-anchor="middle">N</text><g transform="translate(207.6 210.0) scale(0.76)"><rect x="0" y="0" width="10" height="10" rx="1.2" fill="#fff" stroke="#d9d9d9" stroke-width=".5"/><path d="M2.6 7.6 L6.4 3.8" stroke="#1b5fc2" stroke-width="1.7" stroke-linecap="butt" fill="none"/><path d="M3.6 2.4 H7.7 V6.5 Z" fill="#1b5fc2"/></g><path d="M414.6 160.15 H425.40000000000003 L430.40000000000003 165.15 V181.35 Q430.40000000000003 182.35 429.40000000000003 182.35 H414.6 Q413.6 182.35 413.6 181.35 V161.15 Q413.6 160.15 414.6 160.15 Z" fill="#fff" stroke="#bcbcbc" stroke-width=".6"/><path d="M425.40000000000003 160.15 V164.35 Q425.40000000000003 165.15 426.20000000000005 165.15 H430.40000000000003" fill="#f1f1f1" stroke="#bcbcbc" stroke-width=".6"/><rect x="422.3" y="169.15" width="5.8" height="1.65" fill="#c8dcf6"/><rect x="422.3" y="170.8" width="5.8" height="1.65" fill="#a9c8f0"/><rect x="422.3" y="172.45000000000002" width="5.8" height="1.65" fill="#8db4e8"/><rect x="422.3" y="174.1" width="5.8" height="1.65" fill="#a9c8f0"/><rect x="409.2" y="166.55" width="11.6" height="11.4" rx=".7" fill="#185abd"/><text x="415.0" y="175.25" font-family="Liberation Sans, sans-serif" font-weight="700" font-size="8.2" fill="#fff" text-anchor="middle">W</text><g transform="translate(407.5 176.15) scale(0.76)"><rect x="0" y="0" width="10" height="10" rx="1.2" fill="#fff" stroke="#d9d9d9" stroke-width=".5"/><path d="M2.6 7.6 L6.4 3.8" stroke="#1b5fc2" stroke-width="1.7" stroke-linecap="butt" fill="none"/><path d="M3.6 2.4 H7.7 V6.5 Z" fill="#1b5fc2"/></g><path d="M415.0 193.9 H425.7 L430.7 198.9 V214.9 Q430.7 215.9 429.7 215.9 H415.0 Q414.0 215.9 414.0 214.9 V194.9 Q414.0 193.9 415.0 193.9 Z" fill="#fff" stroke="#bcbcbc" stroke-width=".6"/><path d="M425.7 193.9 V198.1 Q425.7 198.9 426.5 198.9 H430.7" fill="#f1f1f1" stroke="#bcbcbc" stroke-width=".6"/><circle cx="425.4" cy="205.1" r="3.3" fill="#ed6c47"/><path d="M425.4 205.1 V201.1 A4 4 0 0 1 429.4 205.1 Z" fill="#ff8f6b" stroke="#fff" stroke-width=".5"/><rect x="409.8" y="200.5" width="11.4" height="11.2" rx=".7" fill="#c43e1c"/><text x="415.6" y="209.1" font-family="Liberation Sans, sans-serif" font-weight="700" font-size="8.4" fill="#fff" text-anchor="middle">P</text><g transform="translate(407.6 210.0) scale(0.76)"><rect x="0" y="0" width="10" height="10" rx="1.2" fill="#fff" stroke="#d9d9d9" stroke-width=".5"/><path d="M2.6 7.6 L6.4 3.8" stroke="#1b5fc2" stroke-width="1.7" stroke-linecap="butt" fill="none"/><path d="M3.6 2.4 H7.7 V6.5 Z" fill="#1b5fc2"/></g><path d="M612.0 160.15 H622.9 L627.9 165.15 V181.45000000000002 Q627.9 182.45000000000002 626.9 182.45000000000002 H612.0 Q611.0 182.45000000000002 611.0 181.45000000000002 V161.15 Q611.0 160.15 612.0 160.15 Z" fill="#fff" stroke="#cfcfcf" stroke-width=".6"/><path d="M622.9 160.15 V164.35 Q622.9 165.15 623.6999999999999 165.15 H627.9" fill="#f1f1f1" stroke="#cfcfcf" stroke-width=".6"/><rect x="613.3" y="167.15" width="12.1" height="1.55" fill="#ececec"/><rect x="613.3" y="168.70000000000002" width="12.1" height="1.55" fill="#e4e4e4"/><rect x="613.3" y="170.25" width="12.1" height="1.55" fill="#ececec"/><rect x="613.3" y="171.8" width="12.1" height="1.55" fill="#e4e4e4"/><rect x="616.2" y="175.15" width="6.2" height="5.2" rx="1.3" fill="#fff" stroke="#d2492a" stroke-width="1.1"/><rect x="624.1" y="176.25" width="3.9" height="3.3" rx=".4" fill="#d2492a"/><g transform="translate(606.7 175.65) scale(0.76)"><rect x="0" y="0" width="10" height="10" rx="1.2" fill="#fff" stroke="#d9d9d9" stroke-width=".5"/><path d="M2.6 7.6 L6.4 3.8" stroke="#1b5fc2" stroke-width="1.7" stroke-linecap="butt" fill="none"/><path d="M3.6 2.4 H7.7 V6.5 Z" fill="#1b5fc2"/></g><path d="M614.6 193.9 H625.4 L630.4 198.9 V215.1 Q630.4 216.1 629.4 216.1 H614.6 Q613.6 216.1 613.6 215.1 V194.9 Q613.6 193.9 614.6 193.9 Z" fill="#fff" stroke="#bcbcbc" stroke-width=".6"/><path d="M625.4 193.9 V198.1 Q625.4 198.9 626.1999999999999 198.9 H630.4" fill="#f1f1f1" stroke="#bcbcbc" stroke-width=".6"/><rect x="622.3" y="202.9" width="5.8" height="1.65" fill="#c8dcf6"/><rect x="622.3" y="204.55" width="5.8" height="1.65" fill="#a9c8f0"/><rect x="622.3" y="206.20000000000002" width="5.8" height="1.65" fill="#8db4e8"/><rect x="622.3" y="207.85" width="5.8" height="1.65" fill="#a9c8f0"/><rect x="609.2" y="200.3" width="11.6" height="11.4" rx=".7" fill="#185abd"/><text x="615.0" y="209.0" font-family="Liberation Sans, sans-serif" font-weight="700" font-size="8.2" fill="#fff" text-anchor="middle">W</text><g transform="translate(607.5 209.9) scale(0.76)"><rect x="0" y="0" width="10" height="10" rx="1.2" fill="#fff" stroke="#d9d9d9" stroke-width=".5"/><path d="M2.6 7.6 L6.4 3.8" stroke="#1b5fc2" stroke-width="1.7" stroke-linecap="butt" fill="none"/><path d="M3.6 2.4 H7.7 V6.5 Z" fill="#1b5fc2"/></g><g transform="translate(197.05 169.08714285714285) scale(0.4928571428571429)"><path d="M3.6 9.6 C1.6 9.6 0.6 8.3 0.6 6.9 C0.6 5.4 1.8 4.3 3.3 4.3 C3.8 2.2 5.4 0.9 7.3 0.9 C9.3 0.9 10.8 2.3 11.1 4.2 C12.6 4.3 13.5 5.5 13.5 6.9 C13.5 8.4 12.4 9.6 10.8 9.6 Z" fill="#fdfeff" fill-opacity=".6" stroke="#4389d8" stroke-width="1.45" stroke-linejoin="round"/></g><g transform="translate(197.05 202.83714285714285) scale(0.4928571428571429)"><path d="M3.6 9.6 C1.6 9.6 0.6 8.3 0.6 6.9 C0.6 5.4 1.8 4.3 3.3 4.3 C3.8 2.2 5.4 0.9 7.3 0.9 C9.3 0.9 10.8 2.3 11.1 4.2 C12.6 4.3 13.5 5.5 13.5 6.9 C13.5 8.4 12.4 9.6 10.8 9.6 Z" fill="#fdfeff" fill-opacity=".6" stroke="#4389d8" stroke-width="1.45" stroke-linejoin="round"/></g><g transform="translate(397.05 169.08714285714285) scale(0.4928571428571429)"><path d="M3.6 9.6 C1.6 9.6 0.6 8.3 0.6 6.9 C0.6 5.4 1.8 4.3 3.3 4.3 C3.8 2.2 5.4 0.9 7.3 0.9 C9.3 0.9 10.8 2.3 11.1 4.2 C12.6 4.3 13.5 5.5 13.5 6.9 C13.5 8.4 12.4 9.6 10.8 9.6 Z" fill="#fdfeff" fill-opacity=".6" stroke="#4389d8" stroke-width="1.45" stroke-linejoin="round"/></g><g transform="translate(397.05 202.83714285714285) scale(0.4928571428571429)"><path d="M3.6 9.6 C1.6 9.6 0.6 8.3 0.6 6.9 C0.6 5.4 1.8 4.3 3.3 4.3 C3.8 2.2 5.4 0.9 7.3 0.9 C9.3 0.9 10.8 2.3 11.1 4.2 C12.6 4.3 13.5 5.5 13.5 6.9 C13.5 8.4 12.4 9.6 10.8 9.6 Z" fill="#fdfeff" fill-opacity=".6" stroke="#4389d8" stroke-width="1.45" stroke-linejoin="round"/></g><g transform="translate(597.05 169.08714285714285) scale(0.4928571428571429)"><path d="M3.6 9.6 C1.6 9.6 0.6 8.3 0.6 6.9 C0.6 5.4 1.8 4.3 3.3 4.3 C3.8 2.2 5.4 0.9 7.3 0.9 C9.3 0.9 10.8 2.3 11.1 4.2 C12.6 4.3 13.5 5.5 13.5 6.9 C13.5 8.4 12.4 9.6 10.8 9.6 Z" fill="#fdfeff" fill-opacity=".6" stroke="#4389d8" stroke-width="1.45" stroke-linejoin="round"/></g><g transform="translate(597.05 202.83714285714285) scale(0.4928571428571429)"><path d="M3.6 9.6 C1.6 9.6 0.6 8.3 0.6 6.9 C0.6 5.4 1.8 4.3 3.3 4.3 C3.8 2.2 5.4 0.9 7.3 0.9 C9.3 0.9 10.8 2.3 11.1 4.2 C12.6 4.3 13.5 5.5 13.5 6.9 C13.5 8.4 12.4 9.6 10.8 9.6 Z" fill="#fdfeff" fill-opacity=".6" stroke="#4389d8" stroke-width="1.45" stroke-linejoin="round"/></g><rect x="383.3" y="167.7" width="7.8" height="7.5" rx="1.4" fill="#0f5fc2"/><path d="M385.2 171.6 L386.7 173.1 L389.4 170.2" fill="none" stroke="#fff" stroke-width=".8" stroke-linecap="round" stroke-linejoin="round"/><path d="M211.6 256.5 H214.8 L217.0 258.7 V264.0 Q217.0 265.0 216.0 265.0 H211.6 Q210.6 265.0 210.6 264.0 V257.5 Q210.6 256.5 211.6 256.5 Z" fill="#fff" stroke="#adadad" stroke-width=".6"/><path d="M214.8 256.5 V257.9 Q214.8 258.7 215.60000000000002 258.7 H217.0" fill="#f1f1f1" stroke="#adadad" stroke-width=".6"/><rect x="213.2" y="259.5" width="2.9" height="2.7" fill="#a9d0f8"/><rect x="208.6" y="258.29999999999995" width="4.8" height="4.8" rx=".5" fill="#185abd"/><rect x="210.1" y="259.59999999999997" width="1.9" height="2.2" rx=".3" fill="#fff" fill-opacity=".9"/><rect x="210.65" y="260.2" width=".9" height="1.0" fill="#185abd"/><rect x="207.8" y="262.7" width="3" height="2.9" rx=".4" fill="#fff"/><path d="M208.3 265.09999999999997 L209.6 263.79999999999995" stroke="#1b6fd8" stroke-width=".8"/><path d="M208.7 263.2 H210.4 V264.9 Z" fill="#1b6fd8"/><g transform="translate(196.20000000000002 257.9871428571429) scale(0.4928571428571429)"><path d="M3.6 9.6 C1.6 9.6 0.6 8.3 0.6 6.9 C0.6 5.4 1.8 4.3 3.3 4.3 C3.8 2.2 5.4 0.9 7.3 0.9 C9.3 0.9 10.8 2.3 11.1 4.2 C12.6 4.3 13.5 5.5 13.5 6.9 C13.5 8.4 12.4 9.6 10.8 9.6 Z" fill="#fdfeff" fill-opacity=".6" stroke="#4389d8" stroke-width="1.45" stroke-linejoin="round"/></g><path d="M211.6 275.35 H214.8 L217.0 277.55 V282.85 Q217.0 283.85 216.0 283.85 H211.6 Q210.6 283.85 210.6 282.85 V276.35 Q210.6 275.35 211.6 275.35 Z" fill="#fff" stroke="#adadad" stroke-width=".6"/><path d="M214.8 275.35 V276.75 Q214.8 277.55 215.60000000000002 277.55 H217.0" fill="#f1f1f1" stroke="#adadad" stroke-width=".6"/><rect x="213.2" y="278.35" width="2.9" height="2.7" fill="#a9d0f8"/><rect x="208.6" y="277.15" width="4.8" height="4.8" rx=".5" fill="#185abd"/><rect x="210.1" y="278.45" width="1.9" height="2.2" rx=".3" fill="#fff" fill-opacity=".9"/><rect x="210.65" y="279.05" width=".9" height="1.0" fill="#185abd"/><circle cx="199.6" cy="279.0" r="2.95" fill="none" stroke="#3f9b52" stroke-width=".6"/><path d="M198.2 279.0 L199.2 280.1 L201.1 277.90000000000003" fill="none" stroke="#3f9b52" stroke-width=".6" stroke-linecap="round" stroke-linejoin="round"/><path d="M211.6 294.25 H214.8 L217.0 296.45 V301.75 Q217.0 302.75 216.0 302.75 H211.6 Q210.6 302.75 210.6 301.75 V295.25 Q210.6 294.25 211.6 294.25 Z" fill="#fff" stroke="#adadad" stroke-width=".6"/><path d="M214.8 294.25 V295.65 Q214.8 296.45 215.60000000000002 296.45 H217.0" fill="#f1f1f1" stroke="#adadad" stroke-width=".6"/><rect x="213.2" y="297.25" width="2.9" height="2.7" fill="#f8b8a0"/><rect x="208.6" y="296.04999999999995" width="4.8" height="4.8" rx=".5" fill="#c43e1c"/><rect x="210.1" y="297.34999999999997" width="1.9" height="2.2" rx=".3" fill="#fff" fill-opacity=".9"/><rect x="210.65" y="297.95" width=".9" height="1.0" fill="#c43e1c"/><path d="M211.6 341.25 H214.8 L217.0 343.45 V348.75 Q217.0 349.75 216.0 349.75 H211.6 Q210.6 349.75 210.6 348.75 V342.25 Q210.6 341.25 211.6 341.25 Z" fill="#fff" stroke="#adadad" stroke-width=".6"/><path d="M214.8 341.25 V342.65 Q214.8 343.45 215.60000000000002 343.45 H217.0" fill="#f1f1f1" stroke="#adadad" stroke-width=".6"/><rect x="213.2" y="344.25" width="2.9" height="2.7" fill="#f8b8a0"/><rect x="208.6" y="343.04999999999995" width="4.8" height="4.8" rx=".5" fill="#c43e1c"/><rect x="210.1" y="344.34999999999997" width="1.9" height="2.2" rx=".3" fill="#fff" fill-opacity=".9"/><rect x="210.65" y="344.95" width=".9" height="1.0" fill="#c43e1c"/><rect x="207.8" y="347.45" width="3" height="2.9" rx=".4" fill="#fff"/><path d="M208.3 349.84999999999997 L209.6 348.54999999999995" stroke="#1b6fd8" stroke-width=".8"/><path d="M208.7 347.95 H210.4 V349.65 Z" fill="#1b6fd8"/><g transform="translate(196.20000000000002 342.7371428571429) scale(0.4928571428571429)"><path d="M3.6 9.6 C1.6 9.6 0.6 8.3 0.6 6.9 C0.6 5.4 1.8 4.3 3.3 4.3 C3.8 2.2 5.4 0.9 7.3 0.9 C9.3 0.9 10.8 2.3 11.1 4.2 C12.6 4.3 13.5 5.5 13.5 6.9 C13.5 8.4 12.4 9.6 10.8 9.6 Z" fill="#fdfeff" fill-opacity=".6" stroke="#4389d8" stroke-width="1.45" stroke-linejoin="round"/></g><path d="M210.4 360.04999999999995 H213.70000000000002 L216.3 362.65 V368.24999999999994 Q216.3 369.24999999999994 215.3 369.24999999999994 H210.4 Q209.4 369.24999999999994 209.4 368.24999999999994 V361.04999999999995 Q209.4 360.04999999999995 210.4 360.04999999999995 Z" fill="#fff" stroke="#b4b4b4" stroke-width=".6"/><path d="M213.70000000000002 360.04999999999995 V361.84999999999997 Q213.70000000000002 362.65 214.50000000000003 362.65 H216.3" fill="#f1f1f1" stroke="#b4b4b4" stroke-width=".6"/><rect x="208.9" y="365.04999999999995" width="8.0" height="2.0" rx=".6" fill="#e2613e"/><circle cx="212.85" cy="366.04999999999995" r="1.55" fill="#fff" stroke="#e2613e" stroke-width=".7"/><circle cx="212.85" cy="366.04999999999995" r=".55" fill="#f3a58e"/><path d="M211.6 379.05 H214.8 L217.0 381.25 V386.55 Q217.0 387.55 216.0 387.55 H211.6 Q210.6 387.55 210.6 386.55 V380.05 Q210.6 379.05 211.6 379.05 Z" fill="#fff" stroke="#adadad" stroke-width=".6"/><path d="M214.8 379.05 V380.45 Q214.8 381.25 215.60000000000002 381.25 H217.0" fill="#f1f1f1" stroke="#adadad" stroke-width=".6"/><rect x="213.2" y="382.05" width="2.9" height="2.7" fill="#f8b8a0"/><rect x="208.6" y="380.84999999999997" width="4.8" height="4.8" rx=".5" fill="#c43e1c"/><rect x="210.1" y="382.15" width="1.9" height="2.2" rx=".3" fill="#fff" fill-opacity=".9"/><rect x="210.65" y="382.75" width=".9" height="1.0" fill="#c43e1c"/><rect x="207.8" y="385.25" width="3" height="2.9" rx=".4" fill="#fff"/><path d="M208.3 387.65 L209.6 386.34999999999997" stroke="#1b6fd8" stroke-width=".8"/><path d="M208.7 385.75 H210.4 V387.45 Z" fill="#1b6fd8"/><g transform="translate(196.20000000000002 380.5371428571429) scale(0.4928571428571429)"><path d="M3.6 9.6 C1.6 9.6 0.6 8.3 0.6 6.9 C0.6 5.4 1.8 4.3 3.3 4.3 C3.8 2.2 5.4 0.9 7.3 0.9 C9.3 0.9 10.8 2.3 11.1 4.2 C12.6 4.3 13.5 5.5 13.5 6.9 C13.5 8.4 12.4 9.6 10.8 9.6 Z" fill="#fdfeff" fill-opacity=".6" stroke="#4389d8" stroke-width="1.45" stroke-linejoin="round"/></g><path d="M211.6 397.95 H214.8 L217.0 400.15 V405.45 Q217.0 406.45 216.0 406.45 H211.6 Q210.6 406.45 210.6 405.45 V398.95 Q210.6 397.95 211.6 397.95 Z" fill="#fff" stroke="#adadad" stroke-width=".6"/><path d="M214.8 397.95 V399.34999999999997 Q214.8 400.15 215.60000000000002 400.15 H217.0" fill="#f1f1f1" stroke="#adadad" stroke-width=".6"/><rect x="213.2" y="400.95" width="2.9" height="2.7" fill="#a9d0f8"/><rect x="208.6" y="399.74999999999994" width="4.8" height="4.8" rx=".5" fill="#185abd"/><rect x="210.1" y="401.04999999999995" width="1.9" height="2.2" rx=".3" fill="#fff" fill-opacity=".9"/><rect x="210.65" y="401.65" width=".9" height="1.0" fill="#185abd"/><rect x="207.8" y="404.15" width="3" height="2.9" rx=".4" fill="#fff"/><path d="M208.3 406.54999999999995 L209.6 405.24999999999994" stroke="#1b6fd8" stroke-width=".8"/><path d="M208.7 404.65 H210.4 V406.34999999999997 Z" fill="#1b6fd8"/><g transform="translate(196.20000000000002 399.4371428571429) scale(0.4928571428571429)"><path d="M3.6 9.6 C1.6 9.6 0.6 8.3 0.6 6.9 C0.6 5.4 1.8 4.3 3.3 4.3 C3.8 2.2 5.4 0.9 7.3 0.9 C9.3 0.9 10.8 2.3 11.1 4.2 C12.6 4.3 13.5 5.5 13.5 6.9 C13.5 8.4 12.4 9.6 10.8 9.6 Z" fill="#fdfeff" fill-opacity=".6" stroke="#4389d8" stroke-width="1.45" stroke-linejoin="round"/></g><path d="M211.6 416.85 H214.8 L217.0 419.05 V424.35 Q217.0 425.35 216.0 425.35 H211.6 Q210.6 425.35 210.6 424.35 V417.85 Q210.6 416.85 211.6 416.85 Z" fill="#fff" stroke="#adadad" stroke-width=".6"/><path d="M214.8 416.85 V418.25 Q214.8 419.05 215.60000000000002 419.05 H217.0" fill="#f1f1f1" stroke="#adadad" stroke-width=".6"/><rect x="213.2" y="419.85" width="2.9" height="2.7" fill="#dcb4f0"/><rect x="208.6" y="418.65" width="4.8" height="4.8" rx=".5" fill="#7719aa"/><rect x="210.1" y="419.95" width="1.9" height="2.2" rx=".3" fill="#fff" fill-opacity=".9"/><rect x="210.65" y="420.55" width=".9" height="1.0" fill="#7719aa"/><rect x="207.8" y="423.05" width="3" height="2.9" rx=".4" fill="#fff"/><path d="M208.3 425.45 L209.6 424.15" stroke="#1b6fd8" stroke-width=".8"/><path d="M208.7 423.55 H210.4 V425.25 Z" fill="#1b6fd8"/><g transform="translate(196.20000000000002 418.3371428571429) scale(0.4928571428571429)"><path d="M3.6 9.6 C1.6 9.6 0.6 8.3 0.6 6.9 C0.6 5.4 1.8 4.3 3.3 4.3 C3.8 2.2 5.4 0.9 7.3 0.9 C9.3 0.9 10.8 2.3 11.1 4.2 C12.6 4.3 13.5 5.5 13.5 6.9 C13.5 8.4 12.4 9.6 10.8 9.6 Z" fill="#fdfeff" fill-opacity=".6" stroke="#4389d8" stroke-width="1.45" stroke-linejoin="round"/></g><rect x="209.4" y="436.54999999999995" width="7.1" height="7.1" rx="1.1" fill="#fff" stroke="#bdbdbd" stroke-width=".7"/><path d="M211.5 438.34999999999997 L214.5 440.04999999999995 L211.5 441.75 Z" fill="#7cc0f2" stroke="#7cc0f2" stroke-width=".4" stroke-linejoin="round"/><path d="M210.4 454.54999999999995 H213.70000000000002 L216.3 457.15 V462.74999999999994 Q216.3 463.74999999999994 215.3 463.74999999999994 H210.4 Q209.4 463.74999999999994 209.4 462.74999999999994 V455.54999999999995 Q209.4 454.54999999999995 210.4 454.54999999999995 Z" fill="#fff" stroke="#b4b4b4" stroke-width=".6"/><path d="M213.70000000000002 454.54999999999995 V456.34999999999997 Q213.70000000000002 457.15 214.50000000000003 457.15 H216.3" fill="#f1f1f1" stroke="#b4b4b4" stroke-width=".6"/><rect x="208.9" y="459.54999999999995" width="8.0" height="2.0" rx=".6" fill="#e2613e"/><circle cx="212.85" cy="460.54999999999995" r="1.55" fill="#fff" stroke="#e2613e" stroke-width=".7"/><circle cx="212.85" cy="460.54999999999995" r=".55" fill="#f3a58e"/><path d="M211.6 473.55 H214.8 L217.0 475.75 V481.05 Q217.0 482.05 216.0 482.05 H211.6 Q210.6 482.05 210.6 481.05 V474.55 Q210.6 473.55 211.6 473.55 Z" fill="#fff" stroke="#adadad" stroke-width=".6"/><path d="M214.8 473.55 V474.95 Q214.8 475.75 215.60000000000002 475.75 H217.0" fill="#f1f1f1" stroke="#adadad" stroke-width=".6"/><rect x="213.2" y="476.55" width="2.9" height="2.7" fill="#a9d0f8"/><rect x="208.6" y="475.34999999999997" width="4.8" height="4.8" rx=".5" fill="#185abd"/><rect x="210.1" y="476.65" width="1.9" height="2.2" rx=".3" fill="#fff" fill-opacity=".9"/><rect x="210.65" y="477.25" width=".9" height="1.0" fill="#185abd"/></svg></div>
</div>
</div>
</body></html>
